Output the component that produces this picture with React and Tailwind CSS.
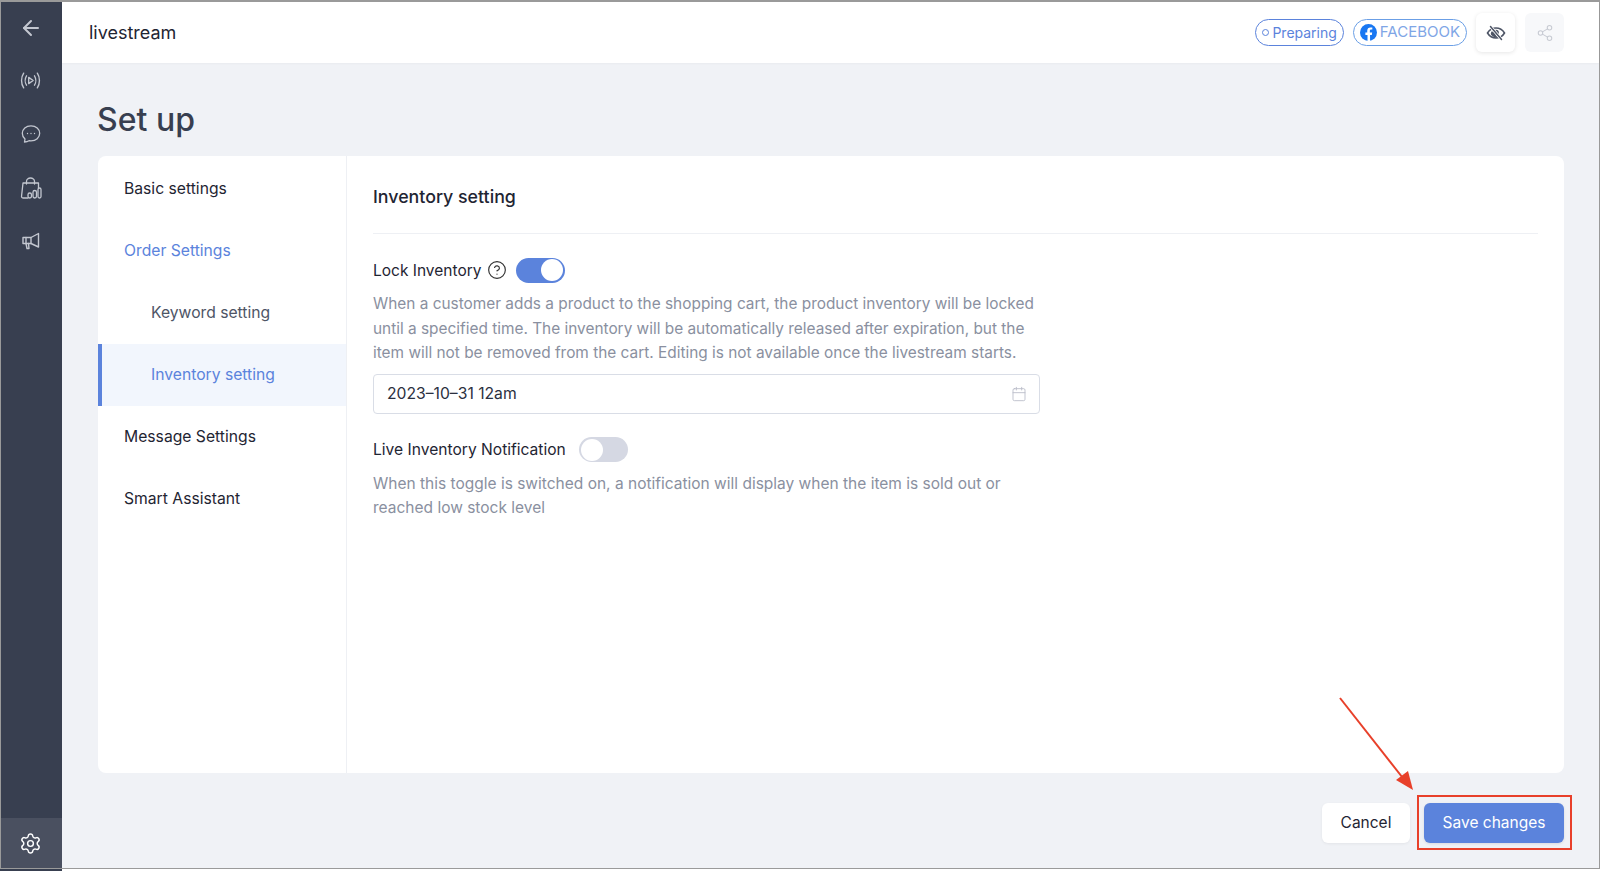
import { ArrowLeft, Settings, Share2, CircleHelp, Calendar } from 'lucide-react';

function Broadcast() {
  return (
    <svg width="21" height="21" viewBox="0 0 20 20" fill="none" stroke="#c3c7d0" strokeWidth="1.3" strokeLinecap="round" strokeLinejoin="round">
      <path d="M3.500 3C.8 7 .8 13 3.500 17" />
      <path d="M6.200 5.500C4.600 8 4.600 12 6.200 14.500" />
      <path d="M16.500 3C19.200 7 19.200 13 16.500 17" />
      <path d="M13.800 5.500C15.400 8 15.400 12 13.800 14.500" />
      <path d="M8.300 7V13L12.500 10Z" />
    </svg>
  );
}

function Chat() {
  return (
    <svg width="20" height="20" viewBox="0 0 20 20" fill="none" stroke="#c3c7d0" strokeWidth="1.3" strokeLinecap="round" strokeLinejoin="round">
      <path d="M10 1.800C5 1.800 1.300 5 1.300 9.300C1.300 11.800 2.500 13.700 4 15L3.500 18C5.500 17.800 7 17.300 8 16.700C8.700 16.800 9.300 16.900 10 16.900C15 16.900 18.700 13.600 18.700 9.300C18.700 5 15 1.800 10 1.800Z" />
      <circle cx="6.500" cy="9.500" r="0.7" fill="#c3c7d0" stroke="none" />
      <circle cx="10" cy="9.500" r="0.7" fill="#c3c7d0" stroke="none" />
      <circle cx="13.500" cy="9.500" r="0.7" fill="#c3c7d0" stroke="none" />
    </svg>
  );
}

function Shop() {
  return (
    <svg width="24" height="24" viewBox="0 0 24 24" fill="none" stroke="#c3c7d0" strokeWidth="1.3" strokeLinecap="round" strokeLinejoin="round">
      <path d="M7.500 8V5.500C7.500 3.500 9.300 2 11.500 2C13.700 2 15.500 3.500 15.500 5.500V8" />
      <path d="M19.500 12V7H4L2.500 20.500C2.500 21.500 3 22 4 22H9" />
      <rect x="9" y="17" width="3.500" height="5" rx="1.700" />
      <rect x="14" y="14.500" width="3.500" height="7.500" rx="1.700" />
      <rect x="19" y="12" width="3" height="10" rx="1.500" />
    </svg>
  );
}

function Horn() {
  return (
    <svg width="20" height="20" viewBox="0 0 20 20" fill="none" stroke="#c3c7d0" strokeWidth="1.4" strokeLinecap="round" strokeLinejoin="round">
      <path d="M2 6.500H10V12.500H2Z" />
      <path d="M5 6.500V12.500" />
      <path d="M10 6.500L17.500 2.500V16L10 12.500" />
      <path d="M5 12.500L6 17.500H8L7.500 12.500" />
    </svg>
  );
}

function EyeSlash() {
  return (
    <svg width="20" height="20" viewBox="0 0 20 20" fill="none" strokeLinecap="round">
      <path d="M1.500 10C3.500 6.700 6.500 5 10 5C13.500 5 16.500 6.700 18.500 10C16.500 13.300 13.500 15 10 15C6.500 15 3.500 13.300 1.500 10Z" stroke="#4e5566" strokeWidth="1.600" />
      <path d="M6 8L12 14.500C9.500 15 7.500 14 5.500 12.300C4.500 11.500 4.500 9.500 6 8Z" fill="#4e5566" />
      <circle cx="10" cy="9.500" r="2.800" fill="#4e5566" />
      <path d="M4.500 3.500L15.500 16.500" stroke="#fff" strokeWidth="3" />
      <path d="M4.500 3.500L15.500 16.500" stroke="#4e5566" strokeWidth="1.500" />
    </svg>
  );
}

function FacebookLogo() {
  return (
    <svg width="17" height="17" viewBox="0 0 24 24">
      <circle cx="12" cy="12" r="12" fill="#1877f2" />
      <path d="M16.700 15.500l.500-3.500h-3.300V9.800c0-1 .500-1.900 2-1.900h1.500V5c0 0-1.400-.200-2.700-.200-2.700 0-4.500 1.700-4.500 4.600V12H7.600v3.500h3v8.400c.600.100 1.200.100 1.800.100s1.200 0 1.800-.100v-8.400z" fill="#fff" />
    </svg>
  );
}

function NavItem({ children, active, sub, blue }) {
  return (
    <div className={`relative h-[62px] flex items-center text-[15.7px] ${sub ? 'pl-[53px]' : 'pl-[26px]'} ${active ? 'bg-[#f2f6fd]' : ''} ${blue || active ? 'text-[#5b83dc]' : sub ? 'text-[#4e5566]' : 'text-[#1f2533]'}`}>
      {active && <span className="absolute left-0 top-0 bottom-0 w-1 bg-[#5b83dc]" />}
      {children}
    </div>
  );
}

function Toggle({ on }) {
  return (
    <span className={`flex items-center w-[49px] h-[25px] rounded-full p-[2px] ${on ? 'bg-[#5b83dc] justify-end' : 'bg-[#d5d8e3] justify-start'}`}>
      <span className="w-[22px] h-[22px] rounded-full bg-white" />
    </span>
  );
}

export default function App() {
  return (
    <div className="relative w-[1600px] h-[871px] overflow-hidden bg-white font-['Inter',sans-serif]">
      <div className="flex h-[869px] border border-t-2 border-[#9a9a9a] bg-[#f0f2f6]">
        <aside className="w-[61px] shrink-0 bg-[#383f50] flex flex-col items-stretch">
          <div className="h-[51px] pr-[2px] flex items-center justify-center"><ArrowLeft size={24} color="#c3c7d0" strokeWidth={2} /></div>
          <div className="h-[55px] pr-[2px] flex items-center justify-center"><Broadcast /></div>
          <div className="h-[52px] pr-[2px] flex items-center justify-center"><Chat /></div>
          <div className="h-[56px] pr-[2px] flex items-center justify-center"><Shop /></div>
          <div className="h-[50px] pr-[2px] flex items-center justify-center"><Horn /></div>
          <div className="mt-auto w-full h-[50px] pr-[2px] bg-[#4a5060] flex items-center justify-center"><Settings size={23} color="#fff" strokeWidth={1.5} /></div>
        </aside>
        <main className="flex-1 flex flex-col min-w-0">
          <header className="h-[61px] shrink-0 bg-white flex items-center pl-[27px] pr-[35px] shadow-[0_1px_2px_rgba(0,0,0,0.03)]">
            <span className="text-[18px] text-[#1f2533]">livestream</span>
            <div className="ml-auto flex items-center gap-[9px]">
              <span className="flex items-center h-[27px] px-[6px] gap-[3px] rounded-full border border-[#5b83dc] text-[#5b83dc] text-[14px]">
                <span className="w-[7px] h-[7px] rounded-full border-[1.5px] border-[#5b83dc]" />Preparing
              </span>
              <span className="flex items-center h-[27px] px-[6px] gap-[3px] rounded-full border border-[#6b9fe6] text-[#7fa6e6] text-[15px]">
                <FacebookLogo />FACEBOOK
              </span>
              <span className="w-[39px] h-[39px] rounded-md bg-white shadow-[0_1px_4px_rgba(0,0,0,0.1)] flex items-center justify-center"><EyeSlash /></span>
              <span className="w-[39px] h-[39px] ml-px rounded-md bg-[#f7f8fa] flex items-center justify-center"><Share2 size={18} color="#c8cbd3" strokeWidth={1.4} /></span>
            </div>
          </header>
          <div className="flex-1 flex flex-col min-h-0 pl-[36px] pr-[35px]">
            <h1 className="h-[93px] pt-[20px] -ml-px shrink-0 flex items-center text-[32px] text-[#383f50] font-medium">Set up</h1>
            <section className="h-[617px] shrink-0 bg-white rounded-lg flex">
              <nav className="w-[249px] shrink-0 pt-[2px] border-r border-[#eef0f4]">
                <NavItem>Basic settings</NavItem>
                <NavItem blue>Order Settings</NavItem>
                <NavItem sub>Keyword setting</NavItem>
                <NavItem sub active>Inventory setting</NavItem>
                <NavItem>Message Settings</NavItem>
                <NavItem>Smart Assistant</NavItem>
              </nav>
              <div className="flex-1 pl-[26px] pr-[26px]">
                <h2 className="h-[78px] pt-[6px] flex items-center border-b border-[#eef0f4] text-[17.8px] font-medium text-[#1f2533]">Inventory setting</h2>
                <div className="mt-[23px] flex items-center gap-[6px] h-[26px] text-[15.5px] text-[#1f2533]">
                  <span className="pt-[2px]">Lock Inventory</span>
                  <CircleHelp size={20} color="#333" strokeWidth={1.4} />
                  <span className="ml-[3px]"><Toggle on /></span>
                </div>
                <p className="mt-[9px] w-[670px] text-[15.4px] leading-[24.5px] text-[#8a90a0]">
                  When a customer adds a product to the shopping cart, the product inventory will be locked until a specified time. The inventory will be automatically released after expiration, but the item will not be removed from the cart. Editing is not available once the livestream starts.
                </p>
                <div className="mt-[8px] w-[667px] h-[40px] rounded-[4px] border border-[#d9dde6] flex items-center justify-between pl-[13px] pr-[12px] text-[15.7px] text-[#2b3040]">
                  2023–10–31 12am
                  <Calendar size={16} color="#b8bcc8" strokeWidth={1.3} />
                </div>
                <div className="mt-[23px] flex items-center gap-[13px] h-[26px] text-[15.6px] text-[#1f2533]">
                  Live Inventory Notification
                  <Toggle />
                </div>
                <p className="mt-[9px] w-[670px] text-[15.5px] leading-[24.5px] text-[#8a90a0]">
                  When this toggle is switched on, a notification will display when the item is sold out or reached low stock level
                </p>
              </div>
            </section>
            <div className="mt-[30px] flex justify-end gap-[14px]">
              <button className="w-[88px] h-[40px] rounded-md bg-white text-[15.5px] text-[#1f2533] shadow-[0_1px_3px_rgba(0,0,0,0.06)]">Cancel</button>
              <button className="w-[140px] h-[40px] rounded-md bg-[#5b83dc] text-[15.5px] text-white shadow-[0_1px_3px_rgba(0,0,0,0.1)]">Save changes</button>
            </div>
          </div>
        </main>
      </div>
      <span className="absolute left-0 bottom-0 w-[62px] h-[2px] bg-[#383f50]" />
      <span className="absolute left-[1417px] top-[795px] w-[155px] h-[55px] border-2 border-[#e8402a]" />
      <svg className="absolute left-[1330px] top-[690px]" width="90" height="110" viewBox="0 0 90 110">
        <path d="M10 8L76 92" stroke="#e8402a" strokeWidth="2" />
        <path d="M83 100L66 90L78 81Z" fill="#e8402a" />
      </svg>
    </div>
  );
}
